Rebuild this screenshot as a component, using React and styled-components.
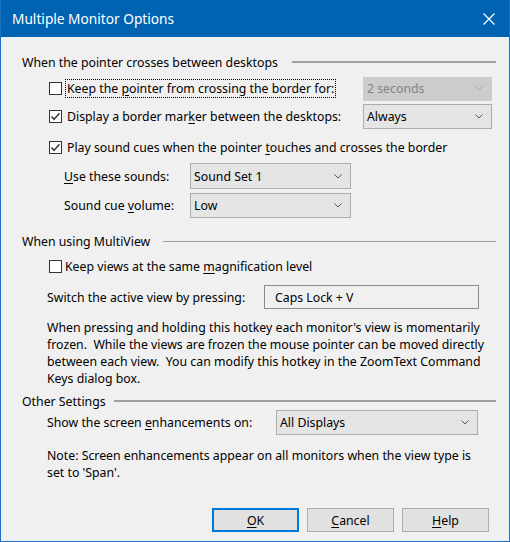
import React from 'react';
import styled, { createGlobalStyle } from 'styled-components';

const GlobalStyle = createGlobalStyle`
  html, body {
    margin: 0;
    padding: 0;
    background: #ffffff;
  }
  * {
    box-sizing: border-box;
  }
`;

const Window = styled.div`
  width: 510px;
  height: 542px;
  border: 1px solid #1a6fc0;
  border-top: none;
  background: #f0f0f0;
  font-family: "Noto Sans", "Open Sans", sans-serif;
  font-size: 12.3px;
  color: #000;
  display: flex;
  flex-direction: column;
  overflow: hidden;
`;

const TitleBar = styled.div`
  height: 37px;
  margin: 0 -1px;
  background: #0063b1;
  color: #fff;
  display: flex;
  align-items: center;
  justify-content: space-between;
  padding: 0 15px 0 12px;
  font-size: 13.7px;
`;

const CloseIcon = () => (
  <svg width="12" height="12" viewBox="0 0 12 12">
    <path d="M0.5 0.5 L11.5 11.5 M11.5 0.5 L0.5 11.5" stroke="#fff" strokeWidth="1.2" />
  </svg>
);

const Body = styled.div`
  flex: 1;
  display: flex;
  flex-direction: column;
  padding: 17px 13px 0 21px;
`;

const GroupHeader = styled.div`
  display: flex;
  align-items: center;
  height: 16px;
  white-space: nowrap;
  margin-top: ${p => p.$mt || 0}px;

  &::after {
    content: '';
    flex: 1;
    margin-left: ${p => p.$gap || 13}px;
    border-top: ${p => (p.$thin ? 1 : 2)}px solid #a0a0a0;
  }
`;

const Row = styled.div`
  display: flex;
  align-items: center;
  height: ${p => p.$h}px;
  margin-top: ${p => p.$mt}px;
  padding-left: ${p => p.$indent}px;
  padding-right: ${p => p.$right || 0}px;
  justify-content: ${p => (p.$spread ? 'space-between' : 'flex-start')};
`;

const CheckWrap = styled.span`
  display: inline-flex;
  align-items: center;
`;

const Box = styled.span`
  width: 13px;
  height: 13px;
  border: 1px solid #333;
  background: #fff;
  display: inline-flex;
  align-items: center;
  justify-content: center;
  flex-shrink: 0;
  margin-right: ${p => p.$gap || 5}px;
`;

const CheckLabel = styled.span`
  display: inline-block;
  padding: 0 1px;
  border: 1px ${p => (p.$focus ? 'dotted #000' : 'solid transparent')};
  margin-left: -2px;
  white-space: nowrap;
`;

const Check = ({ checked, focus, gap, children }) => (
  <CheckWrap>
    <Box $gap={gap}>
      {checked && (
        <svg width="11" height="11" viewBox="0 0 11 11">
          <path d="M1.5 5.5 L4 8.2 L9.5 2.2" fill="none" stroke="#3b3b3b" strokeWidth="1.6" />
        </svg>
      )}
    </Box>
    <CheckLabel $focus={focus}>{children}</CheckLabel>
  </CheckWrap>
);

const Label = styled.span`
  width: ${p => p.$w}px;
  flex-shrink: 0;
  white-space: nowrap;
`;

const Select = styled.div`
  width: ${p => p.$w}px;
  height: ${p => p.$h || 25}px;
  display: flex;
  align-items: center;
  justify-content: space-between;
  padding: 0 8px 0 3px;
  border: 1px solid ${p => (p.$disabled ? '#cccccc' : '#adadad')};
  background: ${p => (p.$disabled ? '#cccccc' : '#e5e5e5')};
  color: ${p => (p.$disabled ? '#838383' : '#000')};
  white-space: nowrap;
`;

const Chevron = ({ disabled }) => (
  <svg width="8" height="5" viewBox="0 0 8 5">
    <path d="M0.5 0.5 L4 4 L7.5 0.5" fill="none" stroke={disabled ? '#a8a8a8' : '#555'} strokeWidth="1" />
  </svg>
);

const Dropdown = ({ w, h, disabled, children }) => (
  <Select $w={w} $h={h} $disabled={disabled}>
    <span>{children}</span>
    <Chevron disabled={disabled} />
  </Select>
);

const TextBox = styled.div`
  width: 215px;
  height: 24px;
  border: 1px solid #8c8c8c;
  background: #f0f0f0;
  display: flex;
  align-items: center;
  padding-left: 10px;
`;

const Para = styled.p`
  margin: ${p => p.$mt}px 0 0;
  padding-left: 25px;
  line-height: 17px;
  white-space: pre;
`;

const U = styled.span`
  text-decoration: underline;
  text-underline-offset: 2px;
`;

const ButtonBar = styled.div`
  display: flex;
  justify-content: flex-end;
  gap: 8px;
  margin-top: 27px;
  padding-right: 7px;
`;

const Button = styled.button`
  width: 87px;
  height: 24px;
  font: inherit;
  color: #000;
  background: #e1e1e1;
  border: ${p => (p.$default ? '2px solid #0078d7' : '1px solid #adadad')};
  padding: 0;
`;

export default function App() {
  return (
    <>
      <GlobalStyle />
      <Window>
        <TitleBar>
          <span>Multiple Monitor Options</span>
          <CloseIcon />
        </TitleBar>
        <Body>
          <GroupHeader $gap={14}>When the pointer crosses between desktops</GroupHeader>

          <Row $h={25} $mt={6} $indent={27} $right={4} $spread>
            <Check focus>Keep the <U>p</U>ointer from crossing the border for:</Check>
            <Dropdown w={129} h={24} disabled>2 seconds</Dropdown>
          </Row>
          <Row $h={25} $mt={3} $indent={27} $right={4} $spread>
            <Check checked>Display a border mar<U>k</U>er between the desktops:</Check>
            <Dropdown w={129}>Always</Dropdown>
          </Row>
          <Row $h={24} $mt={6} $indent={27}>
            <Check checked>Play sound cues when the pointer <U>t</U>ouches and crosses the border</Check>
          </Row>
          <Row $h={26} $mt={4} $indent={42}>
            <Label $w={126}><U>U</U>se these sounds:</Label>
            <Dropdown w={161} h={26}>Sound Set 1</Dropdown>
          </Row>
          <Row $h={25} $mt={4} $indent={42}>
            <Label $w={126}>Sound cue <U>v</U>olume:</Label>
            <Dropdown w={161}>Low</Dropdown>
          </Row>

          <GroupHeader $mt={15} $thin>When using MultiView</GroupHeader>
          <Row $h={20} $mt={7} $indent={27}>
            <Check gap={3}>Keep views at the same <U>m</U>agnification level</Check>
          </Row>
          <Row $h={24} $mt={9} $indent={25}>
            <Label $w={217}>Switch the active view by pressing:</Label>
            <TextBox>Caps Lock + V</TextBox>
          </Row>
          <Para $mt={10}>
            {"When pressing and holding this hotkey each monitor's view is momentarily\n" +
              "frozen.  While the views are frozen the mouse pointer can be moved directly\n" +
              "between each view.  You can modify this hotkey in the ZoomText Command\n" +
              "Keys dialog box."}
          </Para>

          <GroupHeader $mt={6} $gap={8}>Other Settings</GroupHeader>
          <Row $h={25} $mt={1} $indent={25}>
            <Label $w={229}>Show the screen <U>e</U>nhancements on:</Label>
            <Dropdown w={202}>All Displays</Dropdown>
          </Row>
          <Para $mt={12}>
            {"Note: Screen enhancements appear on all monitors when the view type is\n" +
              "set to 'Span'."}
          </Para>

          <ButtonBar>
            <Button $default><U>O</U>K</Button>
            <Button><U>C</U>ancel</Button>
            <Button><U>H</U>elp</Button>
          </ButtonBar>
        </Body>
      </Window>
    </>
  );
}
